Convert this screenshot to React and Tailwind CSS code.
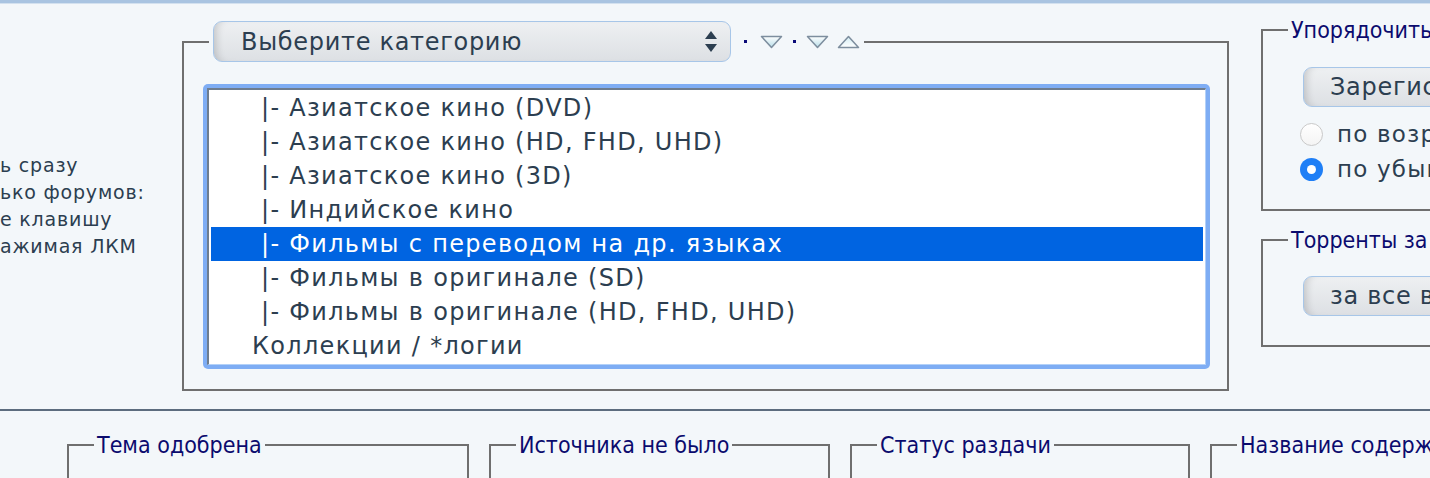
import React from "react";

const F = "font-['DejaVu_Sans',Verdana,sans-serif]";
const LF = "font-['DejaVu_Sans_Condensed','Liberation_Sans_Narrow','Liberation_Sans',sans-serif]";

function Tri({ up }) {
  return (
    <svg width="23" height="14" viewBox="0 0 23 14" className="block">
      <defs>
        <linearGradient id={up ? "gu" : "gd"} x1="0" y1="0" x2="0" y2="1">
          <stop offset="0" stopColor={up ? "#d2ecf3" : "#ffffff"} />
          <stop offset="1" stopColor={up ? "#ffffff" : "#b6dde8"} />
        </linearGradient>
      </defs>
      {up ? (
        <polygon points="1.5,12.5 21.5,12.5 11.5,1.5" fill={`url(#gu)`} stroke="#7d8e9e" strokeWidth="1.5" strokeLinejoin="round" />
      ) : (
        <polygon points="1.5,1.5 21.5,1.5 11.5,12.5" fill={`url(#gd)`} stroke="#7d8e9e" strokeWidth="1.5" strokeLinejoin="round" />
      )}
    </svg>
  );
}

function Dot() {
  return <span className="block w-[3px] h-[3px] bg-[#0a0a78]" />;
}

function PillButton({ children, className = "" }) {
  return (
    <div
      className={`h-[40px] rounded-[9px] border border-[#a7c6e8] bg-linear-to-b from-[#eef0f2] to-[#dde0e4] shadow-[inset_8px_0_8px_-6px_rgba(0,0,0,0.18)] flex items-center text-[24px] tracking-[0.7px] text-[#2c3e50] whitespace-nowrap ${className}`}
    >
      {children}
    </div>
  );
}

function Legend({ children }) {
  return (
    <legend className={`ml-[25px] px-[3px] text-[23px] leading-[26px] text-[#0b0b6e] ${LF} whitespace-nowrap`}>
      {children}
    </legend>
  );
}

const items = [
  { t: "|- Азиатское кино (DVD)", sub: true },
  { t: "|- Азиатское кино (HD, FHD, UHD)", sub: true },
  { t: "|- Азиатское кино (3D)", sub: true },
  { t: "|- Индийское кино", sub: true },
  { t: "|- Фильмы с переводом на др. языках", sub: true, sel: true },
  { t: "|- Фильмы в оригинале (SD)", sub: true },
  { t: "|- Фильмы в оригинале (HD, FHD, UHD)", sub: true },
  { t: "Коллекции / *логии", sub: false },
];

function Radio({ checked, label }) {
  return (
    <div className="h-[35px] flex items-center ml-[37px] whitespace-nowrap">
      {checked ? (
        <span className="w-[23px] h-[23px] rounded-full bg-[#1f7ff6] flex items-center justify-center shrink-0">
          <span className="w-[9px] h-[9px] rounded-full bg-white" />
        </span>
      ) : (
        <span className="w-[23px] h-[23px] rounded-full border border-[#c9c9c9] bg-linear-to-b from-[#ffffff] to-[#f4f4f4] shrink-0" />
      )}
      <span className="ml-[14px] text-[23px] tracking-[1.2px] text-[#2c3e50]">{label}</span>
    </div>
  );
}

export default function App() {
  return (
    <div className={`w-[1430px] h-[478px] overflow-hidden bg-[#f3f7fa] ${F}`}>
      <div className="h-[3px] bg-[#a9c4e1]" />
      <div className="h-px bg-[#d3e1ef]" />
      <div className="flex items-start">
        {/* left hint text */}
        <div className="w-[182px] shrink-0 mt-[17px] h-[370px] flex items-center">
          <div className="text-[19px] leading-[27px] tracking-[0.8px] text-[#2c3e50] whitespace-nowrap">
            <div>ь сразу</div>
            <div>ько форумов:</div>
            <div>е клавишу</div>
            <div>ажимая ЛКМ</div>
          </div>
        </div>

        {/* main fieldset */}
        <fieldset className="mt-[17px] w-[1047px] shrink-0 border-2 border-[#6f6f6f] p-0 min-w-0">
          <legend className="ml-[25px] px-[4px]">
            <div className="flex items-center">
              <PillButton className="w-[518px] h-[41px] pl-[27px] pr-[12px] justify-between">
                <span>Выберите категорию</span>
                <svg width="14" height="24" viewBox="0 0 14 24" className="block">
                  <polygon points="7,1 13,9 1,9" fill="#2c3e50" />
                  <polygon points="1,14 13,14 7,22" fill="#2c3e50" />
                </svg>
              </PillButton>
              <span className="ml-[13px]"><Dot /></span>
              <span className="ml-[13px]"><Tri /></span>
              <span className="ml-[10px]"><Dot /></span>
              <span className="ml-[10px]"><Tri /></span>
              <span className="ml-[8px]"><Tri up /></span>
            </div>
          </legend>
          <div className="ml-[19px] mt-[22px] mb-[20px] w-[1007px] h-[285px] rounded-[5px] bg-[#7eadf4] p-[4px]">
            <div className="h-full bg-white border-t-2 border-l-2 border-[#6e7d8e] border-r border-b border-r-[#b3d1f8] border-b-[#b3d1f8] pt-[1px] px-[2px] overflow-hidden">
              {items.map((it, i) => (
                <div
                  key={i}
                  className={`h-[34px] flex items-center text-[24px] tracking-[1.3px] whitespace-nowrap ${
                    it.sel ? "bg-[#0064e1] text-white" : "text-[#2c3e50]"
                  } ${it.sub ? "pl-[50px]" : "pl-[41px]"}`}
                >
                  {it.t}
                </div>
              ))}
            </div>
          </div>
        </fieldset>

        {/* right column */}
        <div className="ml-[32px] w-[320px] shrink-0">
          <fieldset className="mt-[13px] border-2 border-[#6f6f6f] p-0 pb-[22px] min-w-0">
            <Legend>Упорядочить по</Legend>
            <PillButton className="mt-[24px] ml-[40px] w-[300px] pl-[26px]">Зарегистрирован</PillButton>
            <div className="mt-[10px]">
              <Radio label="по возрастанию" />
              <Radio checked label="по убыванию" />
            </div>
          </fieldset>
          <fieldset className="mt-[16px] border-2 border-[#6f6f6f] p-0 pb-[29px] min-w-0">
            <Legend>Торренты за</Legend>
            <PillButton className="mt-[23px] ml-[40px] w-[300px] pl-[26px]">за все время</PillButton>
          </fieldset>
        </div>
      </div>

      <div className="mt-[18px] h-[2px] bg-[#5c6c7e]" />

      <div className="mt-[21px] ml-[67px] flex gap-[20px]">
        <fieldset className="w-[402px] h-[90px] shrink-0 border-2 border-[#6f6f6f] p-0 min-w-0">
          <Legend>Тема одобрена</Legend>
        </fieldset>
        <fieldset className="w-[341px] h-[90px] shrink-0 border-2 border-[#6f6f6f] p-0 min-w-0">
          <Legend>Источника не было</Legend>
        </fieldset>
        <fieldset className="w-[340px] h-[90px] shrink-0 border-2 border-[#6f6f6f] p-0 min-w-0">
          <Legend>Статус раздачи</Legend>
        </fieldset>
        <fieldset className="w-[340px] h-[90px] shrink-0 border-2 border-[#6f6f6f] p-0 min-w-0">
          <Legend>Название содержит</Legend>
        </fieldset>
      </div>
    </div>
  );
}
